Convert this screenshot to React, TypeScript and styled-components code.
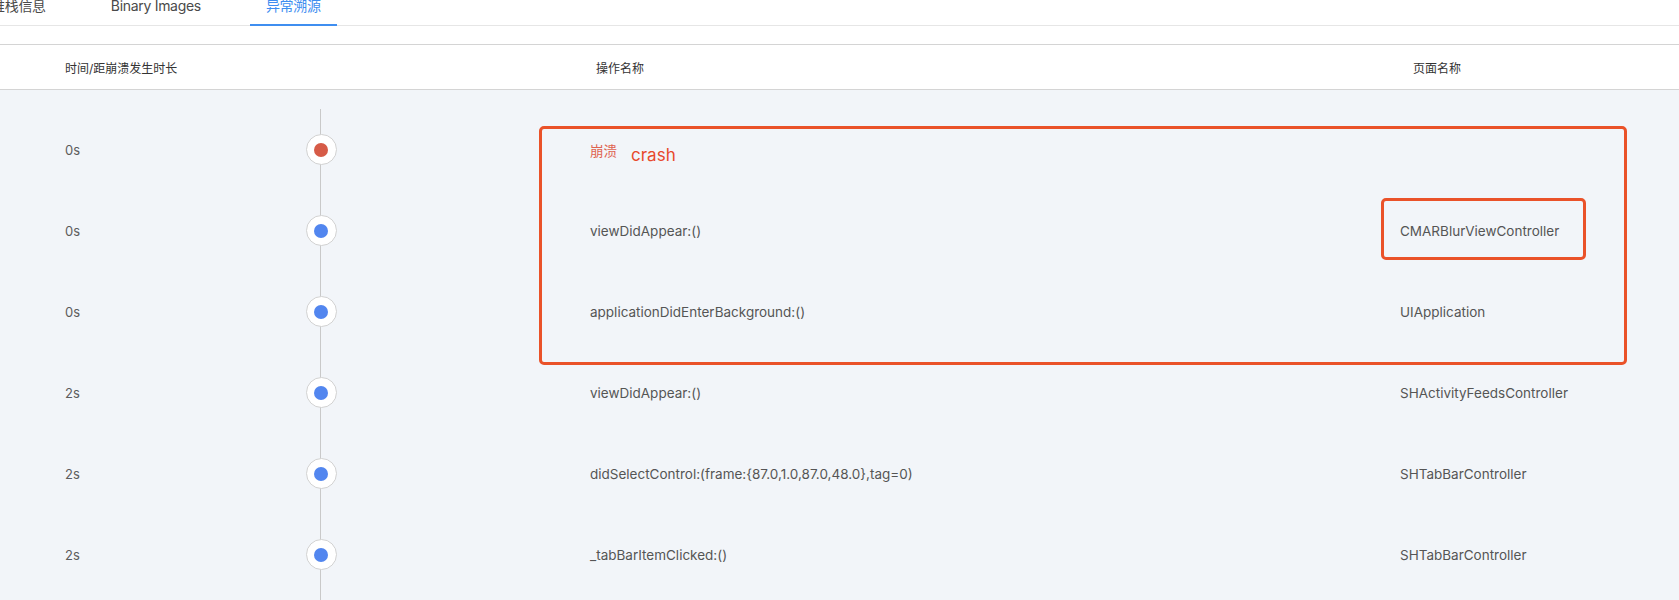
import * as React from "react";
import styled, { createGlobalStyle } from "styled-components";

const GlobalStyle = createGlobalStyle`
    html, body {
        margin: 0;
        padding: 0;
        background: #fff;
        font-family: "Inter", "Noto Sans CJK SC", sans-serif;
    }
`;

const Page = styled.div`
    width: 100%;
    overflow: hidden;
`;

const TabBar = styled.div`
    display: flex;
    gap: 33px;
    height: 25px;
    margin-left: -25px;
    border-bottom: 1px solid #e6e6e6;
`;

const Tab = styled.div<{active?:boolean}>`
    position: relative;
    padding: 0 16px;
    font-size: 14px;
    letter-spacing: -0.3px;
    line-height: 12px;
    color: ${props=>props.active ? "#3f8ef0" : "#4a4a4a"};
    &::after{
        content: "";
        display: ${props=>props.active ? "block" : "none"};
        position: absolute;
        left: 0;
        right: 0;
        bottom: -1px;
        height: 2px;
        background: #3f8ef0;
    }
`;

const Spacer = styled.div`
    height: 18px;
    border-bottom: 1px solid #d4d4d4;
`;

const HeaderRow = styled.div`
    display: grid;
    grid-template-columns: 531px 817px 1fr;
    align-items: center;
    height: 44px;
    padding-left: 65px;
    border-bottom: 1px solid #d4d4d4;
    font-size: 12px;
    color: #333;
`;

const Body = styled.div`
    position: relative;
    background: #f2f5f9;
    padding-top: 19px;
`;

const Row = styled.div`
    display: grid;
    grid-template-columns: 290px 62px 1048px 1fr;
    align-items: center;
    height: 81px;
`;

const TimeCell = styled.div`
    padding-left: 65px;
    font-size: 13px;
    color: #5c5c5c;
`;

const NodeCell = styled.div`
    position: relative;
    height: 100%;
    display: flex;
    align-items: center;
    justify-content: center;
    &::before{
        content: "";
        position: absolute;
        top: 0;
        bottom: 0;
        left: 30px;
        width: 1px;
        background: #c9c9c9;
    }
`;

const Node = styled.div<{crash?:boolean}>`
    position: relative;
    width: 29px;
    height: 29px;
    border-radius: 50%;
    border: 1px solid #d2d2d2;
    background: #fff;
    display: flex;
    align-items: center;
    justify-content: center;
    &::after{
        content: "";
        width: 14px;
        height: 14px;
        border-radius: 50%;
        background: ${props=>props.crash ? "#d65b47" : "#5286ef"};
    }
`;

const ActionCell = styled.div<{crash?:boolean}>`
    padding-left: 238px;
    font-size: 13.5px;
    color: ${props=>props.crash ? "#df6350" : "#555"};
`;

const PageCell = styled.div`
    font-size: 13.5px;
    color: #555;
`;

const Annotation = styled.div`
    position: absolute;
    border: 3px solid #ea5229;
    border-radius: 5px;
    box-sizing: border-box;
`;

const AnnotationText = styled.div`
    position: absolute;
    left: 631px;
    top: 55px;
    font-size: 17px;
    line-height: 20px;
    color: #e8492c;
`;

type Record = {
    time:string,
    action:string,
    page:string,
    crash?:boolean
}

const records:Record[] = [
    {time:"0s",action:"崩溃",page:"",crash:true},
    {time:"0s",action:"viewDidAppear:()",page:"CMARBlurViewController"},
    {time:"0s",action:"applicationDidEnterBackground:()",page:"UIApplication"},
    {time:"2s",action:"viewDidAppear:()",page:"SHActivityFeedsController"},
    {time:"2s",action:"didSelectControl:(frame:{87.0,1.0,87.0,48.0},tag=0)",page:"SHTabBarController"},
    {time:"2s",action:"_tabBarItemClicked:()",page:"SHTabBarController"},
    {time:"3s",action:"viewDidAppear:()",page:"SHHomeViewController"},
];

export default function App(){
    return(
        <Page>
            <GlobalStyle/>
            <TabBar>
                <Tab>堆栈信息</Tab>
                <Tab>Binary Images</Tab>
                <Tab active>异常溯源</Tab>
            </TabBar>
            <Spacer/>
            <HeaderRow>
                <div>时间/距崩溃发生时长</div>
                <div>操作名称</div>
                <div>页面名称</div>
            </HeaderRow>
            <Body>
                {records.map((r,i)=>(
                    <Row key={i}>
                        <TimeCell>{r.time}</TimeCell>
                        <NodeCell><Node crash={r.crash}/></NodeCell>
                        <ActionCell crash={r.crash}>{r.action}</ActionCell>
                        <PageCell>{r.page}</PageCell>
                    </Row>
                ))}
                <AnnotationText>crash</AnnotationText>
                <Annotation style={{left:539,top:36,width:1088,height:239}}/>
                <Annotation style={{left:1381,top:108,width:205,height:62}}/>
            </Body>
        </Page>
    )
}
